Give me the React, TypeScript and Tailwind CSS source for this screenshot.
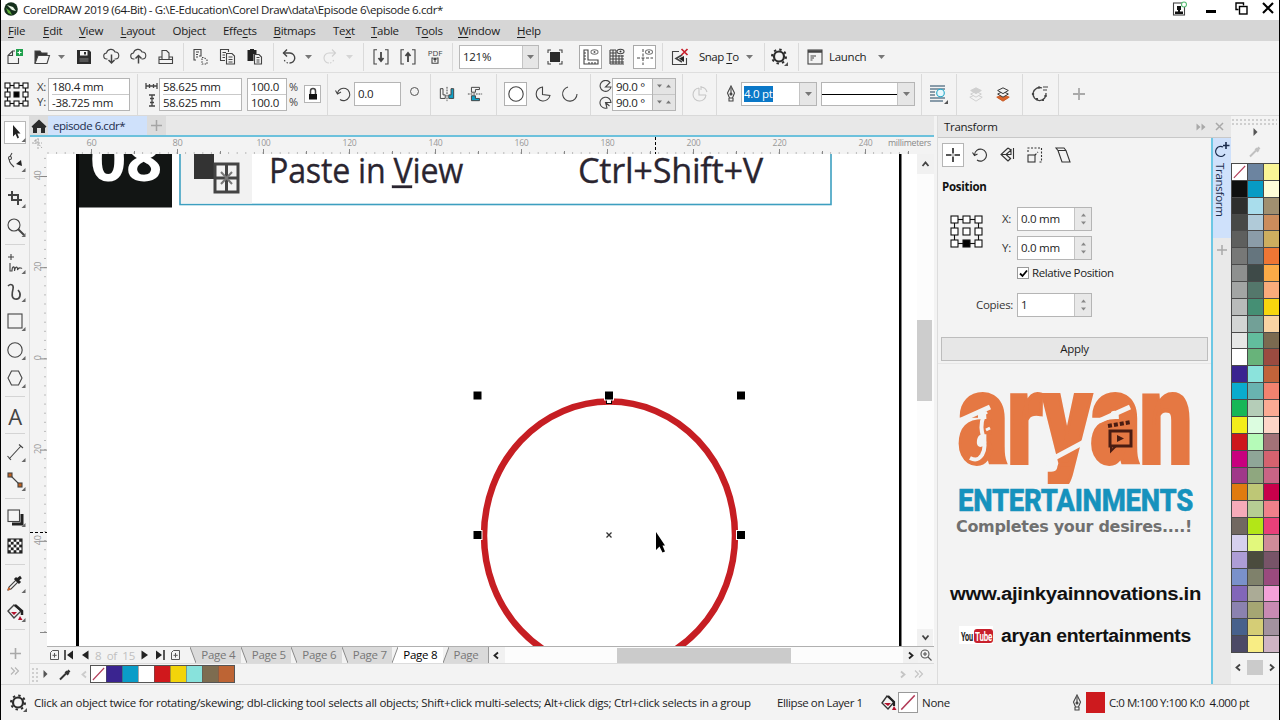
import React from 'react';
import { clsx } from 'clsx';

interface IconProps {
  w?: number;
  h?: number;
  className?: string;
  children: React.ReactNode;
}

function Icon({ w = 18, h = 18, className, children }: IconProps) {
  return (
    <svg
      width={w}
      height={h}
      viewBox={`0 0 ${w} ${h}`}
      fill="none"
      stroke="currentColor"
      strokeWidth={1.1}
      className={clsx('shrink-0', className)}
    >
      {children}
    </svg>
  );
}

interface BoxProps {
  className?: string;
  children?: React.ReactNode;
}

function Cell({ className, children }: BoxProps) {
  return <div className={clsx('flex shrink-0 items-center justify-center', className)}>{children}</div>;
}

function Sep({ className, tall }: { className?: string; tall?: boolean }) {
  return (
    <Cell className={className}>
      <div className={clsx('w-px bg-[#dadada]', tall ? 'h-[41px]' : 'h-[28px]')} />
    </Cell>
  );
}

function Caret({ className, up }: { className?: string; up?: boolean }) {
  return (
    <svg width="7" height="4" viewBox="0 0 7 4" className={clsx('shrink-0 fill-current', className)}>
      <path d={up ? 'M0 4L3.5 0L7 4Z' : 'M0 0L3.5 4L7 0Z'} />
    </svg>
  );
}

const MENUS = [
  { pre: '', key: 'F', post: 'ile', width: 'w-[35px]' },
  { pre: '', key: 'E', post: 'dit', width: 'w-[36px]' },
  { pre: '', key: 'V', post: 'iew', width: 'w-[41.5px]' },
  { pre: '', key: 'L', post: 'ayout', width: 'w-[52px]' },
  { pre: 'Ob', key: 'j', post: 'ect', width: 'w-[50.5px]' },
  { pre: 'Effe', key: 'c', post: 'ts', width: 'w-[50.5px]' },
  { pre: '', key: 'B', post: 'itmaps', width: 'w-[59.5px]' },
  { pre: 'Te', key: 'x', post: 't', width: 'w-[38px]' },
  { pre: '', key: 'T', post: 'able', width: 'w-[44.5px]' },
  { pre: 'T', key: 'o', post: 'ols', width: 'w-[42.5px]' },
  { pre: '', key: 'W', post: 'indow', width: 'w-[59px]' },
  { pre: '', key: 'H', post: 'elp', width: 'w-[30px]' },
];

function TitleBar() {
  return (
    <div className="flex h-[20px] shrink-0 items-center bg-white">
      <Cell className="w-[20px]">
        <Icon w={14} h={14} className="mt-[-2px]">
          <circle cx="7" cy="7" r="6.8" fill="#15301c" stroke="none" />
          <path d="M3 3L9 5L12 9L8 8Z" fill="#e8f4e4" stroke="none" />
          <path d="M2 6L6 9L8 13L4 11Z" fill="#5fae3c" stroke="none" />
        </Icon>
      </Cell>
      <span className="ml-[2px] mt-[-1px] whitespace-nowrap tracking-[-0.39px]">
        CoreIDRAW 2019 (64-Bit) - G:\E-Education\Corel Draw\data\Episode 6\episode 6.cdr*
      </span>
      <div className="ml-auto flex h-full items-center pb-[4px] text-black">
        <Cell className="w-[30px]">
          <Icon w={15} h={15}>
            <rect x="1.5" y="2" width="11" height="12" stroke="#444" />
            <path d="M5 5h4v4h-1v1.500h3V13H3v-2.500h3V9H5Z" fill="#111" stroke="none" />
            <circle cx="12" cy="3.500" r="2.500" fill="#fff" stroke="#58bd74" />
          </Icon>
        </Cell>
        <Cell className="w-[33px]">
          <div className="mt-[7px] h-[3px] w-[10px] bg-black" />
        </Cell>
        <Cell className="w-[29px]">
          <Icon w={13} h={13} className="stroke-[1.4]">
            <path d="M3.500 7.500H1V1H8.500V3.500" />
            <rect x="4.500" y="4.500" width="7.500" height="7.500" />
          </Icon>
        </Cell>
        <Cell className="w-[23px]">
          <Icon w={12} h={12} className="stroke-[2.1]">
            <path d="M1 1L11 11M11 1L1 11" />
          </Icon>
        </Cell>
      </div>
    </div>
  );
}

function MenuBar() {
  return (
    <div className="flex h-[21px] shrink-0 items-center bg-[#d6d6d6] pl-[7px]">
      {MENUS.map((m) => (
        <span key={m.key + m.post} className={clsx('shrink-0', m.width)}>
          {m.pre}
          <u className="underline-offset-2">{m.key}</u>
          {m.post}
        </span>
      ))}
    </div>
  );
}

const CLOUD = 'M4.500 11H4A3 3 0 0 1 3.500 5A4.500 4.500 0 0 1 12 4A3.500 3.500 0 0 1 12.500 11H11.500';

function Gear() {
  return (
    <Icon w={20} h={20} className="text-[#2b2b2b]">
      <circle cx="9" cy="9.500" r="5" strokeWidth="2.200" />
      <circle cx="9" cy="9.500" r="7" strokeWidth="2" strokeDasharray="2.400 3.100" />
      <path d="M18 19V15L14 19Z" fill="#555" stroke="none" />
    </Icon>
  );
}

function StandardBar() {
  return (
    <div className="flex h-[32px] shrink-0 items-center border-b border-[#dedede] text-[#444]">
      <Cell className="w-[28px]">
        <Icon>
          <path d="M9 3H6.500L2 7.500V15.500H12.500V10M6.500 3V7.500H2" />
          <rect x="10" y="1" width="7" height="7" fill="#1fa04c" stroke="none" />
          <path d="M13.500 2.500V6.500M11.500 4.500H15.500" stroke="#fff" />
        </Icon>
      </Cell>
      <Cell className="w-[26px]">
        <Icon>
          <path d="M2 15V3H7L8.500 5H14V7" fill="#333" />
          <path d="M2 15.500L5 7.500H16.500L14 15.500Z" fill="#f4f4f4" />
        </Icon>
      </Cell>
      <Cell className="w-[12px]"><Caret className="text-[#777]" /></Cell>
      <Cell className="w-[34px]">
        <Icon>
          <path d="M2 2H14L16 4V16H2Z" fill="#2b2b2b" stroke="none" />
          <rect x="5" y="3" width="7.500" height="4.500" fill="#f3f3f3" stroke="none" />
          <rect x="9" y="4" width="2" height="2.500" fill="#2b2b2b" stroke="none" />
          <rect x="4.500" y="10" width="9" height="4" fill="#555" stroke="none" />
        </Icon>
      </Cell>
      <Cell className="w-[22px]">
        <Icon>
          <path d={CLOUD} />
          <path d="M8.500 6.500V15M5.500 12L8.500 15L11.500 12" strokeWidth="1.500" />
        </Icon>
      </Cell>
      <Cell className="w-[32px]">
        <Icon>
          <path d={CLOUD} />
          <path d="M8.500 15.500V7.500M5.500 10.500L8.500 7.500L11.500 10.500" strokeWidth="1.500" />
        </Icon>
      </Cell>
      <Cell className="w-[22px]">
        <Icon>
          <path d="M5 11V2.500H9.500L12 5V11M5 9H2V15.500H15.500V9H12M2 11.500H15.500" />
        </Icon>
      </Cell>
      <Sep className="w-[12px]" />
      <Cell className="w-[24px]">
        <Icon>
          <path d="M4 12H2V1.500H9V8H7M4 4H7M4 6.500H6M4 9H6" />
          <path d="M10 9.500H12L15 12V16H10Z" strokeDasharray="1.500 1.200" />
        </Icon>
      </Cell>
      <Cell className="w-[30px]">
        <Icon>
          <path d="M6 12.500H1.500V1.500H9.500V4M3.500 4.500H7M3.500 7H6M3.500 9.500H6" />
          <path d="M7.500 5.500H13L15.500 8V16H7.500ZM9.500 9H13.500M9.500 11.500H13.500M9.500 14H13.500" />
        </Icon>
      </Cell>
      <Cell className="w-[24px]">
        <Icon>
          <path d="M1.500 2H4V1H8V2H10.500V6H7.500V13H1.500Z" fill="#222" stroke="none" />
          <path d="M8.500 6.500H13L15.500 9V16H8.500ZM10.500 9.500H13.500M10.500 12H13.500M10.500 14H13.500" />
        </Icon>
      </Cell>
      <Sep className="w-[12px]" />
      <Cell className="w-[20px]">
        <Icon>
          <path d="M3.500 5H10A5 5 0 0 1 9.500 15" strokeWidth="1.400" />
          <path d="M7 1.500L3.500 5L7 8.500" strokeWidth="1.400" />
          <path d="M8 15A5 5 0 0 1 4 11" strokeDasharray="1.500 1.800" />
        </Icon>
      </Cell>
      <Cell className="w-[18px]"><Caret className="text-[#777]" /></Cell>
      <Cell className="w-[26px] text-[#d0d0d0]">
        <Icon>
          <path d="M14 5H8A5 5 0 0 0 8 15M11 1.500L14.500 5L11 8.500" />
          <path d="M9 15A5 5 0 0 0 13 11" strokeDasharray="1.500 1.800" />
        </Icon>
      </Cell>
      <Cell className="w-[12px]"><Caret className="text-[#d5d5d5]" /></Cell>
      <Sep className="w-[16px]" />
      <Cell className="w-[20px]">
        <Icon>
          <path d="M5 1.800H2V16H5M13 1.800H16V16H13" />
          <path d="M9 4V12M6.500 10L9 13L11.500 10" strokeWidth="1.800" />
        </Icon>
      </Cell>
      <Cell className="w-[34px]">
        <Icon>
          <path d="M5 1.800H2V16H5M13 1.800H16V16H13" />
          <path d="M9 14V5M6.500 8L9 5L11.500 8" strokeWidth="1.800" />
        </Icon>
      </Cell>
      <Cell className="w-[20px] flex-col">
        <span className="text-[8px] leading-[8px] tracking-normal">PDF</span>
        <Icon w={8} h={7}>
          <path d="M2.500 1H1V6.300H7V1H5.500M4 5V1M2.500 2.500L4 1L5.500 2.500" />
        </Icon>
      </Cell>
      <Sep className="w-[14px]" />
      <div className="flex h-[24px] w-[80px] shrink-0 items-center border border-[#b9b9b9] bg-white text-[#1c1c1c]">
        <span className="flex-1 pl-[3px]">121%</span>
        <Cell className="h-full w-[16px] border-l border-[#c4c4c4] bg-[#e6e6e6]">
          <Caret className="text-[#777]" />
        </Cell>
      </div>
      <Cell className="w-[32px]">
        <Icon>
          <path d="M2 5V2H5M13 2H16V5M16 13V16H13M5 16H2V13" />
          <rect x="4" y="4" width="10" height="10" fill="#2b2b2b" stroke="none" />
        </Icon>
      </Cell>
      <Cell className="ml-[8px] h-[24px] w-[23px] border border-[#a9a9a9] bg-white">
        <Icon>
          <path d="M2 2V16H16V12H6V2Z" />
          <path d="M2 5H4M2 8H4M2 11H4M7 16V14M10 16V14M13 16V14" />
          <ellipse cx="12.500" cy="4" rx="3.500" ry="2.200" stroke="#777" />
          <circle cx="12.500" cy="4" r="1" fill="#555" stroke="none" />
        </Icon>
      </Cell>
      <Cell className="w-[30px]">
        <Icon>
          <path d="M2 2V16M5 2V16M8 2V16M11 7V16M14 7V16M2 2H8M2 5H8M2 8H16M2 11H16M2 14H16M2 16H16" />
          <ellipse cx="12.500" cy="3.500" rx="3.500" ry="2.200" />
          <circle cx="12.500" cy="3.500" r="1" fill="#333" stroke="none" />
        </Icon>
      </Cell>
      <Cell className="ml-px h-[24px] w-[23px] border border-[#a9a9a9] bg-white">
        <Icon>
          <path d="M7 1V17M1 10H17" strokeDasharray="3 1.500" strokeWidth="1" />
          <ellipse cx="13" cy="4" rx="3.500" ry="2.200" stroke="#777" />
          <circle cx="13" cy="4" r="1" fill="#555" stroke="none" />
        </Icon>
      </Cell>
      <Sep className="w-[12px]" />
      <Cell className="w-[24px]">
        <Icon>
          <path d="M8 3.500H1.500V16.500H15.500V10" />
          <path d="M11 7L5 10.500L11 14" strokeWidth="1.600" />
          <path d="M8 10.500L13 8V14Z" fill="#222" stroke="none" />
          <path d="M10.500 1L16.500 7M16.500 1L10.500 7" stroke="#c8202c" strokeWidth="1.700" />
        </Icon>
      </Cell>
      <span className="ml-[7px] w-[38px] shrink-0 whitespace-nowrap tracking-[-0.5px] text-[#1c1c1c]">
        Snap <u className="underline-offset-2">T</u>o
      </span>
      <Cell className="w-[24px]"><Caret className="text-[#777]" /></Cell>
      <Sep className="w-[6px]" />
      <Cell className="w-[26px]"><Gear /></Cell>
      <Sep className="w-[10px]" />
      <Cell className="w-[24px]">
        <Icon>
          <rect x="2" y="2" width="14" height="14" />
          <path d="M2 3.500H16" strokeWidth="2.500" />
          <path d="M4.500 8H10M4.500 10H8M4.500 12H6.500" />
        </Icon>
      </Cell>
      <span className="ml-[2px] w-[38px] shrink-0 text-[#1c1c1c]">Launch</span>
      <Cell className="w-[28px]"><Caret className="text-[#777]" /></Cell>
    </div>
  );
}

function StackedField({ values, className }: { values: string[]; className: string }) {
  return (
    <div className={clsx('flex shrink-0 flex-col border border-[#b5b5b5] bg-white text-[#222]', className)}>
      {values.map((v, i) => (
        <div
          key={i}
          className={clsx('flex h-[15.500px] items-center whitespace-nowrap leading-none', i > 0 && 'border-t border-[#c9c9c9]')}
        >
          {v}
        </div>
      ))}
    </div>
  );
}

function AnchorGrid({ size, active }: { size: 'sm' | 'lg'; active: number }) {
  const step = size === 'sm' ? 9 : 12;
  const box = size === 'sm' ? 5 : 7;
  const total = step * 2 + box + 2;
  const mid = box / 2 + 1;
  const cells = [0, 1, 2, 3, 4, 5, 6, 7, 8];
  return (
    <Icon w={total} h={total} className="text-[#111]">
      <rect x={mid} y={mid} width={step * 2} height={step * 2} />
      {cells.map((i) => (
        <rect
          key={i}
          x={1 + (i % 3) * step}
          y={1 + Math.floor(i / 3) * step}
          width={box}
          height={box}
          fill={i === active ? '#000' : '#fff'}
        />
      ))}
    </Icon>
  );
}

function PenNib() {
  return (
    <Icon w={10} h={18} className="text-[#444]">
      <path d="M5 1L8.500 8L6.500 13H3.500L1.500 8Z" />
      <path d="M5 3V9M3 13V16H7V13" />
      <circle cx="5" cy="9" r="1" fill="#333" />
    </Icon>
  );
}

function LayerStack({ muted }: { muted?: boolean }) {
  return (
    <Icon className={clsx('h-[17px] w-[16px]', muted ? 'text-[#cfcfcf]' : 'text-[#333]')}>
      <path d="M2 12L9 9L16 12L9 16.500Z" fill={muted ? '#f3f3f3' : '#d9642b'} stroke={muted ? 'currentColor' : '#c85a25'} />
      <path d="M3 8.500L9 5.500L15 8.500L9 12Z" fill="#f3f3f3" />
      <path d="M3 4.500L9 1.500L15 4.500L9 8Z" fill={muted ? '#cfcfcf' : '#f3f3f3'} />
    </Icon>
  );
}

function PropertyBar() {
  return (
    <div className="flex h-[43px] shrink-0 items-center border-b border-[#d9d9d9] text-[#444]">
      <Cell className="w-[31px]"><AnchorGrid size="sm" active={4} /></Cell>
      <div className="ml-[5px] flex w-[11px] shrink-0 flex-col">
        <span className="h-[15.500px] leading-[15px]">X:</span>
        <span className="h-[15.500px] leading-[15px]">Y:</span>
      </div>
      <StackedField values={['180.4 mm', '-38.725 mm']} className="w-[82px] pl-[3px]" />
      <Sep tall className="w-[14px]" />
      <Cell className="w-[15px] flex-col gap-1">
        <Icon w={13} h={8}>
          <path d="M1 1V7M12 1V7M1 4H12M4.500 2V6M8.500 2V6" strokeWidth="1.300" />
        </Icon>
        <Icon w={8} h={13}>
          <path d="M1 1H7M1 12H7M4 1V12M2 4.500H6M2 8.500H6" strokeWidth="1.300" />
        </Icon>
      </Cell>
      <StackedField values={['58.625 mm', '58.625 mm']} className="w-[83px] pl-[3px]" />
      <StackedField values={['100.0', '100.0']} className="ml-[5px] w-[40px] pl-[3px]" />
      <div className="ml-[2px] flex w-[15px] shrink-0 flex-col text-[11px]">
        <span className="h-[15.500px] leading-[15px]">%</span>
        <span className="h-[15.500px] leading-[15px]">%</span>
      </div>
      <Cell className="h-[18px] w-[17px] border border-[#b5b5b5] bg-white">
        <Icon w={10} h={14}>
          <path d="M2.500 7V4A2.500 2.500 0 0 1 7.500 4V7" strokeWidth="1.500" />
          <rect x="1" y="7" width="8" height="5.500" fill="#111" stroke="none" />
        </Icon>
      </Cell>
      <Sep tall className="w-[12px]" />
      <Cell className="w-[21px]">
        <Icon w={17}>
          <path d="M2.500 8A6.200 6.200 0 1 1 5 14.500M0.500 5.500L2.500 9L6 7" />
        </Icon>
      </Cell>
      <div className="flex h-[24px] w-[47px] shrink-0 items-center border border-[#b5b5b5] bg-white pl-[3px] text-[#222]">0.0</div>
      <Cell className="w-[27px]">
        <div className="mb-[6px] h-[9px] w-[9px] rounded-full border-[1.500px] border-[#555]" />
      </Cell>
      <Sep tall className="w-[4px]" />
      <Cell className="w-[30px]">
        <Icon className="h-[16px] w-[16px]">
          <path d="M1.500 3V14H7V10H4.500V3Z" />
          <path d="M9 1V17" strokeDasharray="2 1" />
          <path d="M16.500 3V14H11V10H13.500V3Z" fill="#12a0c6" />
        </Icon>
      </Cell>
      <Cell className="w-[26px]">
        <Icon className="h-[16px] w-[16px]">
          <path d="M5 7V1.500H14V4H9.500V7Z" />
          <path d="M1 9H17" strokeDasharray="2 1" />
          <path d="M5 11V16.500H14V14H9.500V11Z" fill="#12a0c6" />
        </Icon>
      </Cell>
      <Sep tall className="w-[16px]" />
      <Cell className="h-[24px] w-[23px] border border-[#b0b0b0] bg-white">
        <Icon><circle cx="9" cy="9" r="7.200" /></Icon>
      </Cell>
      <Cell className="w-[31px]">
        <Icon><path d="M8.500 2A7 7 0 1 0 16 10.500L8.500 9.500Z" /></Icon>
      </Cell>
      <Cell className="w-[24px]">
        <Icon><path d="M7 2A7.200 7.200 0 1 0 16 9" /></Icon>
      </Cell>
      <Sep tall className="w-[16px]" />
      <Cell className="w-[14px] flex-col gap-[3px]">
        <Icon w={13} h={13}><path d="M11 2.500A5.500 5.500 0 1 0 12 7H6.500ZM6.500 7H10" /></Icon>
        <Icon w={13} h={13}><path d="M12 6.500A5.500 5.500 0 1 0 8 12L6.500 6.500ZM6.500 6.500L10.500 10" /></Icon>
      </Cell>
      <StackedField values={['90.0 °', '90.0 °']} className="w-[41px] pl-[3px]" />
      <div className="flex h-[33px] w-[23px] shrink-0 flex-col border border-l-0 border-[#b5b5b5] bg-[#e4e4e4] text-[#777]">
        <div className="flex flex-1 items-center justify-evenly border-b border-[#c6c6c6]">
          <Caret className="w-[5px]" /><Caret up className="w-[5px]" />
        </div>
        <div className="flex flex-1 items-center justify-evenly">
          <Caret className="w-[5px]" /><Caret up className="w-[5px]" />
        </div>
      </div>
      <Sep tall className="w-[13px]" />
      <Cell className="w-[22px] text-[#c6c6c6]">
        <Icon><path d="M8 3A6.500 6.500 0 1 0 15 10M8 3V10H15M10 2A7 7 0 0 1 16 7M10 1V5" /></Icon>
      </Cell>
      <Sep tall className="w-[11px]" />
      <Cell className="w-[17px]"><PenNib /></Cell>
      <div className="ml-[2px] flex h-[24px] w-[76px] shrink-0 items-center border border-[#b5b5b5] bg-white">
        <span className="ml-[2px] whitespace-nowrap bg-[#0a78c8] text-white">4.0 pt</span>
        <Cell className="ml-auto h-full w-[17px] border-l border-[#c4c4c4] bg-[#e6e6e6]">
          <Caret className="text-[#777]" />
        </Cell>
      </div>
      <div className="ml-[4px] flex h-[24px] w-[94px] shrink-0 items-center border border-[#b5b5b5] bg-white">
        <div className="h-px flex-1 bg-black" />
        <Cell className="h-full w-[17px] border-l border-[#c4c4c4] bg-[#e6e6e6]">
          <Caret className="text-[#777]" />
        </Cell>
      </div>
      <Sep tall className="w-[13px]" />
      <Cell className="w-[21px]">
        <Icon w={20} h={20}>
          <path d="M1 2H16M1 5H16M1 8H6M1 11H6M1 14H16M1 17H14" stroke="#1f4560" />
          <circle cx="11.500" cy="9" r="3.800" fill="#e6f8fd" stroke="#25a7c9" />
          <path d="M19 20V16L15 20Z" fill="#555" stroke="none" />
        </Icon>
      </Cell>
      <Sep tall className="w-[14px]" />
      <Cell className="w-[26px]"><LayerStack muted /></Cell>
      <Cell className="w-[27px]"><LayerStack /></Cell>
      <Sep tall className="w-[12px]" />
      <Cell className="w-[24px]">
        <Icon>
          <path d="M11 3A6.500 6.500 0 1 0 15 8" strokeWidth="1.300" />
          <path d="M12 2H17M12 5H16" />
          <path d="M7 2.500h2M2 8v2M5 14h2M11 15h2M14.500 10v2" strokeWidth="2.200" />
        </Icon>
      </Cell>
      <Sep tall className="w-[12px]" />
      <Cell className="w-[30px] text-[#a9a9a9]">
        <Icon w={12} h={12} className="stroke-[1.8]"><path d="M6 0V12M0 6H12" /></Icon>
      </Cell>
    </div>
  );
}

// Small corner triangle that marks a flyout tool
function Fly() {
  return <path d="M20.500 20V16L16.500 20Z" fill="#666" stroke="none" />;
}

function Tool({ className, children, active }: BoxProps & { active?: boolean }) {
  return (
    <Cell className={clsx('w-full', className)}>
      <div className={clsx('flex items-center justify-center', active && 'h-[23px] w-[22px] border border-[#b8b8b8] bg-white')}>
        <Icon w={21} h={20}>{children}</Icon>
      </div>
    </Cell>
  );
}

function ToolSep({ className }: { className: string }) {
  return (
    <Cell className={clsx('w-full', className)}>
      <div className="h-px w-[20px] bg-[#d4d4d4]" />
    </Cell>
  );
}

const CHECKS = Array.from({ length: 25 }, (_, i) => i).filter((i) => i % 2 === 0);

function Toolbox() {
  return (
    <div className="flex w-[29px] shrink-0 flex-col border-r border-[#dcdcdc] text-[#444]">
      <Tool className="h-[32px]" active>
        <path d="M8 3L8 14.500L10.500 12L12.500 16.500L14 15.500L12.300 11.500H15.500Z" fill="#222" stroke="none" />
        <Fly />
      </Tool>
      <Tool className="h-[28px]">
        <path d="M7 1C3 7 4 9 6 12L9 15" />
        <circle cx="5" cy="6" r="1.500" fill="#fff" />
        <path d="M11 12L16 8L17 14Z" fill="#222" stroke="none" />
        <Fly />
      </Tool>
      <ToolSep className="h-[4px]" />
      <Tool className="h-[36px]">
        <path d="M7 3V12H17M3 7H13V17" strokeWidth="2" />
        <Fly />
      </Tool>
      <Tool className="h-[22px]">
        <circle cx="9" cy="8" r="6" />
        <path d="M13 12L19 18" strokeWidth="2" />
        <Fly />
      </Tool>
      <ToolSep className="h-[12px]" />
      <Tool className="h-[28px]">
        <path d="M6 0V6M3 3H9" />
        <path d="M5 9V17H7C7 12 10 11 9.500 17C10 12 13 12 12.500 16C14 12 16 15 17 14" />
        <Fly />
      </Tool>
      <Tool className="h-[28px]">
        <path d="M3 4C6 1 9 3 8 7C7 11 6 16 10 17C15 18 17 12 13 8" strokeWidth="1.600" />
        <Fly />
      </Tool>
      <Tool className="h-[30px]"><rect x="3" y="3" width="14" height="14" /><Fly /></Tool>
      <Tool className="h-[28px]"><circle cx="10" cy="10" r="7.200" /><Fly /></Tool>
      <Tool className="h-[28px]"><path d="M6.500 3H13.500L17 10L13.500 17H6.500L3 10Z" /><Fly /></Tool>
      <ToolSep className="h-[8px]" />
      <Cell className="h-[32px] w-full text-[22px] leading-none">A</Cell>
      <ToolSep className="h-[2px]" />
      <Tool className="h-[36px]"><path d="M4 17L16 4M2.500 14L6 18M14 2.500L18 6" /><Fly /></Tool>
      <Tool className="h-[22px]">
        <path d="M5 4L16 15" />
        <rect x="3" y="2" width="4" height="4" fill="#c0601c" />
        <rect x="13" y="12" width="4" height="4" fill="#c0601c" />
        <Fly />
      </Tool>
      <ToolSep className="h-[12px]" />
      <Tool className="h-[26px]">
        <path d="M17 7V17H7" strokeWidth="3" stroke="#222" />
        <rect x="3" y="3" width="11.500" height="11.500" fill="#f4f4f4" />
        <Fly />
      </Tool>
      <Tool className="h-[32px]">
        <rect x="3" y="3" width="14" height="14" fill="#fff" stroke="#222" />
        {CHECKS.map((i) => (
          <rect key={i} x={3 + (i % 5) * 2.8} y={3 + Math.floor(i / 5) * 2.8} width="2.800" height="2.800" fill="#222" stroke="none" />
        ))}
      </Tool>
      <ToolSep className="h-[4px]" />
      <Tool className="h-[34px]">
        <path d="M3 17L4 14L11 7L13 9L6 16Z" />
        <path d="M3 17L5 15" stroke="#d0642b" strokeWidth="2" />
        <path d="M10 5L15 10M12 7L16 4" strokeWidth="3" stroke="#222" />
        <Fly />
      </Tool>
      <Tool className="h-[24px]">
        <path d="M9 3L16 9L9 16L3 9Z" strokeWidth="1.400" />
        <path d="M10 3L17 9V13" strokeWidth="2.500" stroke="#222" />
        <path d="M6 10H12L9 13ZM15 14L17.500 18H13Z" fill="#b3122c" stroke="none" />
        <Fly />
      </Tool>
      <ToolSep className="h-[10px]" />
      <Cell className="h-[38px] w-full text-[#a9a9a9]">
        <Icon w={11} h={11} className="stroke-[1.6]"><path d="M5.500 0V11M0 5.500H11" /></Icon>
      </Cell>
      <div className="mt-[-6px] flex justify-center text-[#b5b5b5]">
        <Icon w={10} h={10}><path d="M1 1.500L4.500 5L1 8.500M5 1.500L8.500 5L5 8.500" /></Icon>
      </div>
    </div>
  );
}

function DocumentTabs() {
  return (
    <div className="flex h-[19px] shrink-0 items-center bg-[#e8e8e8]">
      <Cell className="h-full w-[18px] bg-[#dcdcdc]">
        <Icon w={16} h={14}>
          <path d="M0.500 7.500L8 0.500L15.500 7.500L14 9V14H10V9H6V14H2V9Z" fill="#2b2b2b" stroke="none" />
        </Icon>
      </Cell>
      <div className="flex h-full w-[99px] items-center bg-[#cfe1fb] pl-[5px] tracking-[-0.45px] text-[#1b2c4c]">episode 6.cdr*</div>
      <Cell className="h-full w-[19px] bg-[#dcdcdc] text-[#a5a5a5]">
        <Icon w={11} h={11}><path d="M5.500 0V11M0 5.500H11" strokeWidth="1.500" /></Icon>
      </Cell>
    </div>
  );
}

const H_MARKS = [60, 80, 100, 120, 140, 160, 180, 200, 220, 240];
const V_MARKS = [40, 20, 0, 20, 40];

function HorizontalRuler() {
  const minor = Array.from({ length: 102 }, (_, i) => 18 + i * 8.6).filter((x) => x < 886);
  return (
    <svg width="904" height="17" className="block shrink-0 bg-[#f3f3f3]" fontFamily="'Open Sans', sans-serif" fontSize="9">
      <path d="M5 3L12 11M5 3H9M5 3V7M2 6H12M8 1V13" stroke="#aaa" fill="none" strokeDasharray="2 1" />
      {minor.map((x) => (
        <path key={x} d={`M${x} 15V17`} stroke="#bbb" />
      ))}
      {H_MARKS.map((m, i) => (
        <g key={m}>
          <path d={`M${61.5 + i * 86} 12V17`} stroke="#888" />
          <path d={`M${104.5 + i * 86} 14V17`} stroke="#888" />
          <text x={61.5 + i * 86} y="9" textAnchor="middle" fill="#999" textLength={m > 99 ? 14 : 10} lengthAdjust="spacingAndGlyphs">
            {m}
          </text>
        </g>
      ))}
      <path d="M625.500 0V17" stroke="#000" strokeDasharray="3 2" />
      <text x="858" y="9" fill="#8a8a8a" textLength="43" lengthAdjust="spacingAndGlyphs">millimeters</text>
    </svg>
  );
}

function VerticalRuler() {
  const minor = Array.from({ length: 53 }, (_, i) => 4.4 + i * 9.1);
  return (
    <svg width="17" height="509" className="block shrink-0 bg-[#f3f3f3]" fontFamily="'Open Sans', sans-serif" fontSize="9">
      {minor.map((y) => (
        <path key={y} d={`M14 ${y}H16`} stroke="#bbb" />
      ))}
      {V_MARKS.map((m, i) => (
        <g key={i}>
          <path d={`M10 ${22.5 + i * 91.2}H17`} stroke="#888" />
          <text
            x="0"
            y="0"
            textAnchor="middle"
            fill="#999"
            transform={`translate(10.500 ${21.5 + i * 91.2}) rotate(-90)`}
          >
            {m}
          </text>
        </g>
      ))}
      <path d="M10 478.500H17" stroke="#888" />
      <path d="M0 378.500H17" stroke="#000" strokeDasharray="3 2" />
    </svg>
  );
}

const HANDLES = [[430.5, 241.5], [562, 241.5], [694, 241.5], [430.5, 381], [694, 381]];

// The drawing page: artwork, selected ellipse and its handles
function Canvas() {
  return (
    <svg width="870" height="492" className="block shrink-0 bg-white" fontFamily="'Open Sans', sans-serif">
      <rect x="29" y="0" width="96" height="53.500" fill="#121514" />
      <rect x="29" y="0" width="3" height="492" fill="#000" />
      <rect x="852" y="0" width="2.500" height="492" fill="#000" />
      <text x="43" y="26.500" fontSize="60" fontWeight="700" fill="#fff" textLength="72" lengthAdjust="spacingAndGlyphs">08</text>

      <rect x="133" y="-20" width="651" height="70.500" fill="#fff" stroke="#3d9fc0" strokeWidth="1.600" />
      <rect x="134" y="0" width="71" height="49.500" fill="#f2f2f2" />
      <rect x="147" y="-10" width="20" height="35" fill="#333" />
      <g fill="none" stroke="#444" strokeWidth="3">
        <rect x="168" y="10" width="23" height="28" fill="#f2f2f2" />
        <path d="M179.500 10V38M168 24H191" />
        <path d="M174 18L185 30M185 18L174 30" stroke="#777" strokeWidth="2" />
      </g>
      <g fontSize="34" fill="#2a2530" stroke="#2a2530" strokeWidth="0.300">
        <text x="222" y="28.500" textLength="194" lengthAdjust="spacingAndGlyphs">Paste in View</text>
        <rect x="345" y="31.500" width="20" height="2.500" />
        <text x="531" y="28.500" textLength="185" lengthAdjust="spacingAndGlyphs">Ctrl+Shift+V</text>
      </g>

      <ellipse cx="562.500" cy="381.500" rx="125.500" ry="134" fill="none" stroke="#c61e23" strokeWidth="6.500" />
      <rect x="559.500" y="244.500" width="5" height="5" fill="#fff" stroke="#000" />
      {HANDLES.map(([x, y]) => (
        <rect key={`${x}-${y}`} x={x - 4.5} y={y - 4.5} width="9" height="9" fill="#000" stroke="#fff" />
      ))}
      <path d="M559.500 378.500L564.500 383.500M564.500 378.500L559.500 383.500" stroke="#333" strokeWidth="1.300" />
      <path d="M609 378V396L612.500 392.500L615.500 398.500L618 397.500L615.500 391.500H618Z" fill="#000" />
    </svg>
  );
}

function Chevron({ dir, className }: { dir: 'up' | 'down' | 'left' | 'right'; className?: string }) {
  const paths = {
    up: 'M1.500 6L4.500 2.500L7.500 6',
    down: 'M1.500 2.500L4.500 6L7.500 2.500',
    left: 'M6 1.500L2.500 4.500L6 7.500',
    right: 'M3 1.500L6.500 4.500L3 7.500',
  };
  return (
    <Icon w={9} h={9} className={clsx('stroke-[1.8]', className)}>
      <path d={paths[dir]} />
    </Icon>
  );
}

function VerticalScroll() {
  return (
    <div className="flex w-[17px] shrink-0 flex-col bg-[#fcfcfc] text-[#444]">
      <Cell className="h-[20px] bg-[#f1f1f1]"><Chevron dir="up" /></Cell>
      <div className="mt-[146px] h-[81px] w-[15px] bg-[#cdcdcd]" />
      <Cell className="mt-auto h-[17px] w-[16px] bg-[#f1f1f1]"><Chevron dir="down" /></Cell>
    </div>
  );
}

function PageAdd() {
  return (
    <Icon w={11} h={12} className="text-[#555]">
      <path d="M3.500 1.500H9.500V10.500H1.500V3.500ZM5.500 4V8.500M3.500 6.300H7.700" strokeWidth="1" />
    </Icon>
  );
}

const PAGES = ['Page 4', 'Page 5', 'Page 6', 'Page 7', 'Page 8'];

function PageBar() {
  return (
    <div className="flex h-[17px] shrink-0 items-center border-t border-[#b0b0b0] bg-[#f3f3f3] leading-[15px] text-[#222]">
      <Cell className="w-[14px]"><PageAdd /></Cell>
      <Cell className="w-[16px]">
        <Icon w={10} h={10}><path d="M1 0V10" strokeWidth="1.500" /><path d="M9 0.500V9.500L3 5Z" fill="#222" stroke="none" /></Icon>
      </Cell>
      <Cell className="w-[15px]">
        <Icon w={8} h={10}><path d="M7.500 0.500V9.500L1 5Z" fill="#222" stroke="none" /></Icon>
      </Cell>
      <Cell className="w-[46px] whitespace-pre text-[#c0c0c0]">8  of  15</Cell>
      <Cell className="w-[14px]">
        <Icon w={8} h={10}><path d="M0.500 0.500V9.500L7 5Z" fill="#222" stroke="none" /></Icon>
      </Cell>
      <Cell className="w-[16px]">
        <Icon w={10} h={10}><path d="M9 0V10" strokeWidth="1.500" /><path d="M1 0.500V9.500L7 5Z" fill="#222" stroke="none" /></Icon>
      </Cell>
      <Cell className="w-[14px]"><PageAdd /></Cell>
      <div className="ml-[8px] flex h-full">
        {PAGES.map((p) => {
          const current = p === 'Page 8';
          return (
            <div key={p} className="flex h-full w-[50.500px]">
              <svg width="6" height="16" className="shrink-0">
                <path d={current ? 'M0 16L6 0V16Z' : 'M0 0H6V16Z'} fill={current ? '#fff' : '#dadada'} />
                <path d={current ? 'M0 16L6 0' : 'M0 0L6 16'} stroke="#888" />
              </svg>
              <div
                className={clsx(
                  'flex flex-1 items-center justify-center whitespace-nowrap pb-[2px]',
                  current ? 'bg-white text-black' : 'bg-[#dadada] text-[#777]'
                )}
              >
                {p}
              </div>
            </div>
          );
        })}
        <svg width="6" height="16" className="shrink-0">
          <path d="M0 16L6 0V16Z" fill="#dadada" />
          <path d="M0 16L6 0" stroke="#888" />
        </svg>
        <div className="flex w-[40px] items-center border-r border-[#999] bg-[#dadada] pb-[2px] pl-[5px] text-[#777]">Page</div>
      </div>
      <div className="flex h-full flex-1 items-center bg-[#fcfcfc]">
        <Cell className="h-full w-[16px] bg-[#f1f1f1]"><Chevron dir="left" /></Cell>
        <div className="ml-auto mr-[112px] h-[15px] w-[174px] bg-[#cbcbcb]" />
        <Cell className="h-full w-[15px] bg-[#f1f1f1]"><Chevron dir="right" /></Cell>
        <Cell className="h-full w-[16px] bg-[#f3f3f3] text-[#555]">
          <Icon w={12} h={12}>
            <circle cx="5" cy="5" r="4" />
            <path d="M8 8L11.500 11.500M5 3V7M3 5H7" />
          </Icon>
        </Cell>
      </div>
    </div>
  );
}

const DOC_COLORS = [
  'bg-[#3a2490]', 'bg-[#0a9dc8]', 'bg-white', 'bg-[#d0181c]', 'bg-[#f2d40a]', 'bg-[#88e2dc]', 'bg-[#7d6c50]', 'bg-[#bd6434]',
];

function NoColor({ className }: { className?: string }) {
  return (
    <svg viewBox="0 0 16 16" preserveAspectRatio="none" className={clsx('bg-white', className)}>
      <path d="M2 14L14 2" stroke="#b23b58" strokeWidth="1.200" />
    </svg>
  );
}

function Dropper({ className }: { className?: string }) {
  return (
    <Icon w={14} h={14} className={className}>
      <path d="M2 12.500L8 6.500" strokeWidth="2" />
      <path d="M7.500 4.500L10.500 7.500M9 6L11.500 3.500" strokeWidth="2.600" />
    </Icon>
  );
}

function Grip({ className }: { className?: string }) {
  return (
    <div
      className={clsx(
        'bg-[radial-gradient(#cfcfcf_0.8px,transparent_1px)] bg-[size:4px_4px]',
        className
      )}
    />
  );
}

function DocumentPalette() {
  return (
    <div className="flex h-[21px] shrink-0 items-center border-t border-[#dcdcdc] bg-[#f3f3f3]">
      <Grip className="ml-px h-[15px] w-[8px]" />
      <Cell className="w-[12px]">
        <Icon w={5} h={8}><path d="M0.500 0V8L4.500 4Z" fill="#555" stroke="none" /></Icon>
      </Cell>
      <Cell className="w-[27px]"><Dropper className="text-[#333]" /></Cell>
      <Cell className="w-[12px] text-[#ccc]"><Chevron dir="left" /></Cell>
      <div className="flex h-[18px] border border-[#555]">
        <NoColor className="h-full w-[15px]" />
        {DOC_COLORS.map((c) => (
          <div key={c} className={clsx('w-[16px] border-l border-[#555]/50', c)} />
        ))}
      </div>
      <div className="ml-auto mr-[10px] flex items-center gap-[7px] text-[#c4c4c4]">
        <Chevron dir="right" />
        <Icon w={10} h={10}><path d="M1 1.500L4.500 5L1 8.500M5 1.500L8.500 5L5 8.500" /></Icon>
      </div>
    </div>
  );
}

function SpinField({ value }: { value: string }) {
  return (
    <div className="flex h-[24px] w-[75px] shrink-0 border border-[#b5b5b5] bg-white">
      <span className="flex flex-1 items-center whitespace-nowrap pl-[3px] text-[#1c1c1c]">{value}</span>
      <div className="flex w-[17px] flex-col items-center justify-evenly border-l border-[#c4c4c4] bg-[#e8e8e8] text-[#888]">
        <Caret up className="w-[5px]" />
        <Caret className="w-[5px]" />
      </div>
    </div>
  );
}

function BrandArt() {
  return (
    <svg width="270" height="300" className="block" fontWeight="700">
      <clipPath id="wordmark"><rect x="0" y="0" width="270" height="120" /></clipPath>
      <g clipPath="url(#wordmark)" fill="#e57843" stroke="#e57843" strokeWidth="4" fontFamily="'Roboto', sans-serif">
        <text x="20" y="99" fontSize="128" fontWeight="900" textLength="234" lengthAdjust="spacingAndGlyphs">aryan</text>
      </g>
      <g stroke="#f3f3f3" fill="none">
        <path d="M21 57L52 43M161 57L192 43M107 99L148 77" strokeWidth="5" />
        <path d="M46 51C38 70 52 76 44 91C40 97 36 96 32 94" strokeWidth="4" />
        <path d="M41 54L49 48M48 66L52 64" strokeWidth="3" />
      </g>
      <g stroke="#4a1c12" fill="none">
        <rect x="172" y="67" width="21" height="15" fill="#e57843" strokeWidth="3" />
        <path d="M170 62L193 58" strokeWidth="4" strokeDasharray="4 2" />
        <path d="M173 82V87L178 82" strokeWidth="2" />
        <path d="M179 71V78L186 74.500Z" fill="#4a1c12" stroke="none" />
      </g>
      <text x="20" y="147" fontSize="31" fontWeight="800" fill="#1692bd" stroke="#1692bd" strokeWidth="0.500" fontFamily="'Roboto', sans-serif" textLength="235" lengthAdjust="spacingAndGlyphs">
        ENTERTAINMENTS
      </text>
      <text x="18" y="167.500" fontSize="15" fill="#707070" fontFamily="'DejaVu Sans', sans-serif" textLength="236" lengthAdjust="spacingAndGlyphs">
        Completes your desires....!
      </text>
      <text x="12" y="236" fontSize="18" fill="#111" fontFamily="'Liberation Sans', sans-serif" textLength="251" lengthAdjust="spacingAndGlyphs">
        www.ajinkyainnovations.in
      </text>
      <rect x="21" y="262" width="34" height="18" fill="#fff" />
      <rect x="36" y="265" width="19" height="14" rx="3" fill="#c8202c" />
      <text x="23" y="277" fontSize="12" fill="#222" fontFamily="'Roboto', sans-serif" textLength="12" lengthAdjust="spacingAndGlyphs">You</text>
      <text x="37" y="277" fontSize="12" fill="#fff" fontFamily="'Roboto', sans-serif" textLength="17" lengthAdjust="spacingAndGlyphs">Tube</text>
      <text x="63" y="277.500" fontSize="18" fill="#111" fontFamily="'Liberation Sans', sans-serif" textLength="190" lengthAdjust="spacingAndGlyphs">
        aryan entertainments
      </text>
    </svg>
  );
}

function TransformDocker() {
  return (
    <div className="flex h-full w-[294px] shrink-0 flex-col border-l border-[#dcdcdc]">
      <div className="flex h-[22px] shrink-0 items-center border-b border-[#c8c8c8] bg-[#e7e7e7] pl-[6px] text-[#1c1c1c]">
        <span>Transform</span>
        <div className="ml-auto flex items-center gap-[9px] pr-[7px] text-[#a9a9a9]">
          <Icon w={10} h={8}><path d="M0.500 0.500L4.500 4L0.500 7.500ZM5.500 0.500L9.500 4L5.500 7.500Z" fill="#a9a9a9" stroke="none" /></Icon>
          <Icon w={9} h={9}><path d="M1 1L8 8M8 1L1 8" strokeWidth="1.500" /></Icon>
        </div>
      </div>
      <div className="flex min-h-0 flex-1">
        <div className="flex w-[273px] shrink-0 flex-col text-[#333]">
          <div className="mt-[5px] flex h-[24px] items-center pl-[4px]">
            <Cell className="h-[24px] w-[22px] border border-[#b5b5b5] bg-white">
              <Icon w={16} h={16} className="text-[#222]"><path d="M8 1V15M1 8H15" strokeWidth="1.600" /><path d="M8 6V10M6 8H10" stroke="#fff" strokeWidth="1" /></Icon>
            </Cell>
            <Cell className="w-[33px]">
              <Icon w={17}><path d="M2.500 9A6 6 0 1 1 5 14M0.500 6.500L2.500 9.500L5.500 8" /></Icon>
            </Cell>
            <Cell className="w-[21px]">
              <Icon><path d="M9 2L2 8.500L9 15M9 2L12 4M9 15L12 12M2 8.500H12L12 4L7 8.500L12 13M14.500 2V13" /></Icon>
            </Cell>
            <Cell className="w-[34px]">
              <Icon>
                <rect x="2" y="9" width="7" height="7" />
                <path d="M2 6V2H15.500V16H12M9 9L12 6" strokeDasharray="2 1.500" />
              </Icon>
            </Cell>
            <Cell className="w-[22px]">
              <Icon><path d="M4 4.500H12L16 16H8ZM4 4.500L2 2H10L12 4.500" /></Icon>
            </Cell>
          </div>
          <div className="mt-[12px] h-[16px] pl-[4px] font-bold leading-[16px] text-[#111]">Position</div>
          <div className="mt-[12px] flex">
            <div className="w-[62px] shrink-0 pl-[12px] pt-[8px]"><AnchorGrid size="lg" active={7} /></div>
            <div className="flex flex-col gap-[5px]">
              <div className="flex items-center"><span className="w-[17px] pl-[2px]">X:</span><SpinField value="0.0 mm" /></div>
              <div className="flex items-center"><span className="w-[17px] pl-[2px]">Y:</span><SpinField value="0.0 mm" /></div>
            </div>
          </div>
          <div className="mt-[6px] flex h-[14px] items-center gap-[3px] pl-[79px] tracking-[-0.38px] text-[#1c1c1c]">
            <Cell className="h-[12px] w-[12px] border border-[#999] bg-white">
              <Icon w={9} h={9} className="stroke-[1.8] text-black"><path d="M1 4.500L3.500 7L8 1.500" /></Icon>
            </Cell>
            Relative Position
          </div>
          <div className="mt-[13px] flex items-center pl-[38px]">
            <span className="w-[41px]">Copies:</span>
            <SpinField value="1" />
          </div>
          <button className="ml-[3px] mt-[20px] h-[24px] w-[267px] border border-[#bdbdbd] bg-[#e7e7e7] text-[#1c1c1c]">Apply</button>
          <div className="mt-[2px] border-t border-[#e6e6e6]" />
          <BrandArt />
        </div>
        <div className="flex w-[20px] shrink-0 flex-col border-l-2 border-[#6cc7e4] bg-[#e9e9e9]">
          <div className="flex h-[100px] flex-col items-center bg-[#cfe1fb] text-[#1b2c4c]">
            <Icon w={16} h={18} className="mt-[3px]">
              <path d="M9 6A5 5 0 1 0 11 13" strokeWidth="1.300" />
              <path d="M12 1V8M9 4.500H15.500" strokeWidth="1.600" />
            </Icon>
            <span className="mr-[4px] mt-[4px] [writing-mode:vertical-rl]">Transform</span>
          </div>
          <Cell className="h-[24px] text-[#a9a9a9]">
            <Icon w={10} h={10}><path d="M5 0V10M0 5H10" strokeWidth="1.500" /></Icon>
          </Cell>
        </div>
      </div>
    </div>
  );
}

const SWATCHES = [
  'none', 'bg-[#6c84a0]', 'bg-[#faf595]',
  'bg-[#0e0f0f]', 'bg-[#079bc4]', 'bg-[#fffdd8]',
  'bg-[#2e2f2e]', 'bg-[#a9ddec]', 'bg-[#a08f70]',
  'bg-[#474947]', 'bg-[#b0cad8]', 'bg-[#cb8c5c]',
  'bg-[#5e5f5e]', 'bg-[#8b9ca8]', 'bg-[#cdae5f]',
  'bg-[#777877]', 'bg-[#65757e]', 'bg-[#ee7634]',
  'bg-[#8e908f]', 'bg-[#3e4a48]', 'bg-[#fbab47]',
  'bg-[#a3a5a4]', 'bg-[#54776b]', 'bg-[#f9ab7b]',
  'bg-[#b9bbba]', 'bg-[#458f74]', 'bg-[#f7d60e]',
  'bg-[#d3d5d4]', 'bg-[#72a097]', 'bg-[#f9d3a2]',
  'bg-[#e6e7e6]', 'bg-[#62bd9d]', 'bg-[#7b6a50]',
  'bg-[#ffffff]', 'bg-[#68b37a]', 'bg-[#9b4b40]',
  'bg-[#3a2490]', 'bg-[#8be3dc]', 'bg-[#c1633a]',
  'bg-[#0aacce]', 'bg-[#69b3b0]', 'bg-[#f2826f]',
  'bg-[#17b657]', 'bg-[#b5cdb8]', 'bg-[#fbaa93]',
  'bg-[#f3ed1a]', 'bg-[#dcfde0]', 'bg-[#fdd5c7]',
  'bg-[#cd181c]', 'bg-[#b5fbb8]', 'bg-[#a27278]',
  'bg-[#c8007e]', 'bg-[#8fa698]', 'bg-[#d4626f]',
  'bg-[#a03889]', 'bg-[#8fa77f]', 'bg-[#c86485]',
  'bg-[#e07b10]', 'bg-[#bec776]', 'bg-[#c8004b]',
  'bg-[#f6abb9]', 'bg-[#b6cd94]', 'bg-[#f0808a]',
  'bg-[#716861]', 'bg-[#b3e617]', 'bg-[#e94079]',
  'bg-[#d6d0ef]', 'bg-[#e2f87c]', 'bg-[#d08b99]',
  'bg-[#ad9dd6]', 'bg-[#4a4b3d]', 'bg-[#785468]',
  'bg-[#7a91cb]', 'bg-[#7f816b]', 'bg-[#9a4a7e]',
  'bg-[#8266b9]', 'bg-[#abab96]', 'bg-[#f4a0d8]',
  'bg-[#8b82b0]', 'bg-[#a5a673]', 'bg-[#c98ab3]',
  'bg-[#47618c]', 'bg-[#d5cd76]', 'bg-[#a3929f]',
  'bg-[#4c4a66]', 'bg-[#f8ed84]', 'bg-[#cfb4c4]',
];

function ColorPalette() {
  return (
    <div className="flex w-[48px] shrink-0 flex-col">
      <Grip className="mt-[2px] h-[8px] w-[46px]" />
      <Cell className="h-[12px]">
        <Icon w={5} h={8}><path d="M0.500 0V8L4.500 4Z" fill="#555" stroke="none" /></Icon>
      </Cell>
      <Cell className="h-[25px]"><Dropper className="text-[#c0c0c0]" /></Cell>
      <div className="grid h-[490px] grid-cols-3 grid-rows-[repeat(29,minmax(0,1fr))] gap-px border border-r-0 border-[#4a4a4a] bg-[#4a4a4a]">
        {SWATCHES.map((c, i) => (c === 'none' ? <NoColor key={i} className="h-full w-full" /> : <div key={i} className={c} />))}
      </div>
      <div className="mt-[7px] flex items-center justify-between px-[3px] text-[#444]">
        <Chevron dir="left" />
        <div className="h-[15px] w-[16px] bg-[#cbcbcb]" />
        <Chevron dir="right" />
      </div>
    </div>
  );
}

function StatusBar() {
  return (
    <div className="flex h-[36px] shrink-0 items-center border-t border-[#d6d6d6]">
      <Cell className="w-[33px] pl-[2px]"><Gear /></Cell>
      <span className="w-[743px] shrink-0 whitespace-nowrap">
        Click an object twice for rotating/skewing; dbl-clicking tool selects all objects; Shift+click multi-selects; Alt+click digs; Ctrl+click selects in a group
      </span>
      <span className="w-[103px] shrink-0 whitespace-nowrap tracking-[-0.4px]">Ellipse on Layer 1</span>
      <Icon w={17} h={18}>
        <path d="M7 2L14 8L8 15L2 9Z" strokeWidth="1.400" stroke="#333" />
        <path d="M8 2L14 8V12" strokeWidth="2.200" stroke="#222" />
        <path d="M4 9H11L8 12ZM14 12L16.500 16H12Z" fill="#b3122c" stroke="none" />
      </Icon>
      <NoColor className="ml-px h-[21px] w-[20px] border border-[#999]" />
      <span className="ml-[4px]">None</span>
      <div className="ml-auto flex items-center">
        <PenNib />
        <div className="ml-[4px] h-[21px] w-[19px] bg-[#cd1a1e]" />
        <span className="ml-[4px] w-[170px] whitespace-pre tracking-[-0.48px]">C:0 M:100 Y:100 K:0  4.000 pt</span>
      </div>
    </div>
  );
}

export default function App() {
  return (
    <div className="flex h-[720px] w-[1280px] flex-col overflow-hidden border-x border-black bg-[#f3f3f3] font-['Open_Sans',sans-serif] text-[11.5px] leading-[16px] tracking-[-0.28px] text-[#1c1c1c]">
      <TitleBar />
      <MenuBar />
      <StandardBar />
      <PropertyBar />
      <div className="flex h-[568px] shrink-0">
        <Toolbox />
        <div className="flex w-[904px] shrink-0 flex-col">
          <DocumentTabs />
          <div className="h-[2px] shrink-0 bg-[#6cc1dc]" />
          <HorizontalRuler />
          <div className="flex">
            <VerticalRuler />
            <div className="flex min-w-0 flex-1 flex-col">
              <div className="flex h-[492px] overflow-hidden">
                <Canvas />
                <VerticalScroll />
              </div>
              <PageBar />
            </div>
          </div>
          <DocumentPalette />
        </div>
        <div className="w-[3px] shrink-0" />
        <TransformDocker />
        <ColorPalette />
      </div>
      <StatusBar />
    </div>
  );
}
